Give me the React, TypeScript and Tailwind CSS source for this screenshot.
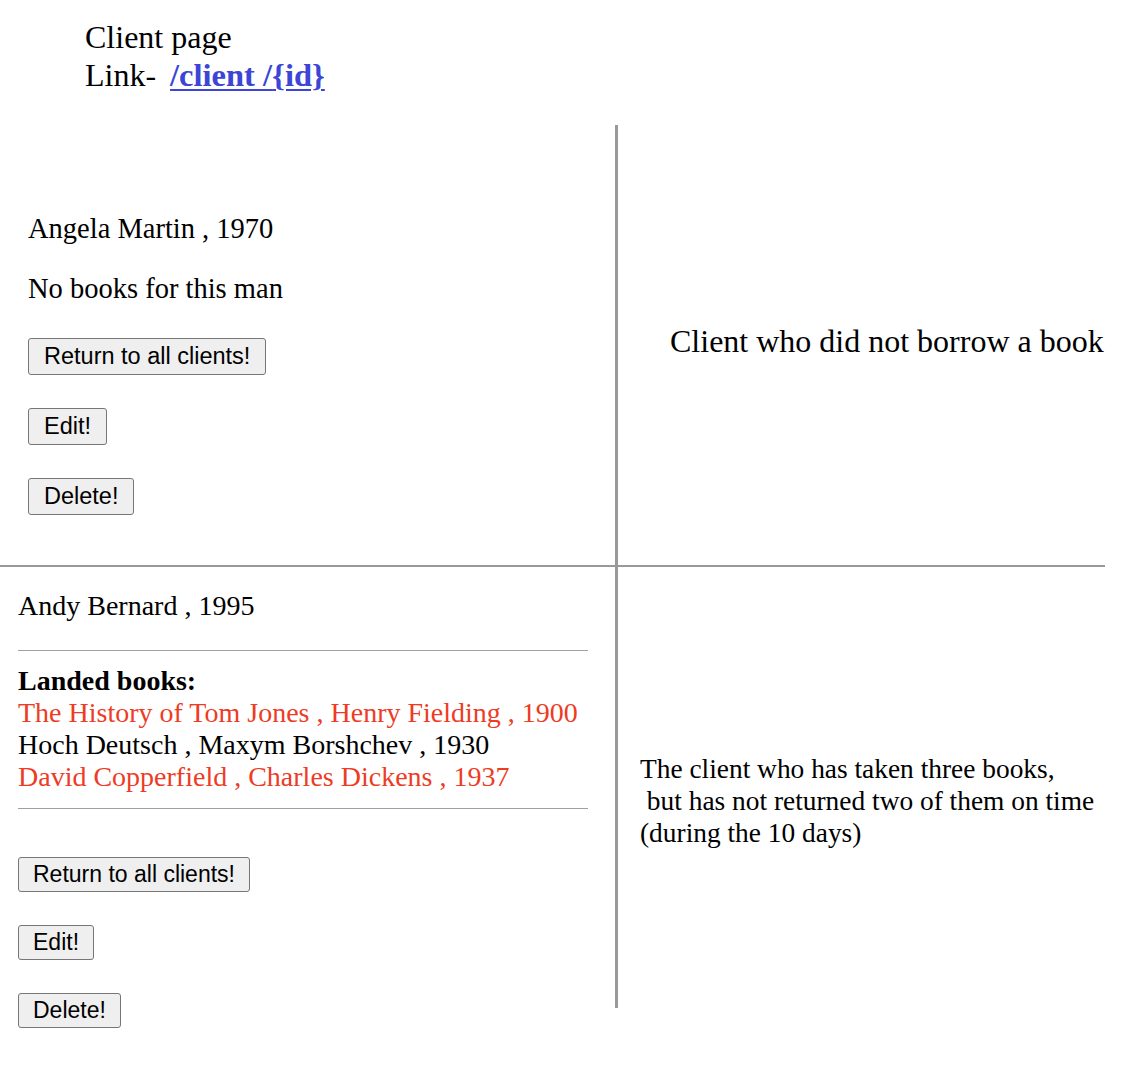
import React from 'react';

const serif = "font-['Liberation_Serif','Times_New_Roman',serif]";

const books = [
    { title: 'The History of Tom Jones', author: 'Henry Fielding', year: 1900, late: true },
    { title: 'Hoch Deutsch', author: 'Maxym Borshchev', year: 1930, late: false },
    { title: 'David Copperfield', author: 'Charles Dickens', year: 1937, late: true },
];

const ClassicButton = ({ label, size }: { label: string, size: 'lg' | 'md' }) => (
    <button
        className={`block rounded-[3px] border border-[#767676] bg-[#efefef] text-black font-['Liberation_Sans',Arial,sans-serif] leading-none ${
            size === 'lg' ? 'h-[37px] px-[15px] text-[23.5px]' : 'h-[35px] px-[14px] text-[23px]'
        }`}
    >
        {label}
    </button>
);

export default function App() {
    return (
        <div className={`${serif} bg-white text-black min-h-[1072px]`}>
            {/* Header */}
            <div className="pl-[85px] pt-[18px] text-[32px] leading-[38px]">
                <div>Client page</div>
                <div>
                    Link-{' '}
                    <a href="#" className="ml-[6px] text-[32.5px] font-bold text-[#3c45d5] underline underline-offset-[3px] decoration-2">
                        /client /{'{id}'}
                    </a>
                </div>
            </div>

            <div className="mt-[31px] w-[1105px]">
                {/* Client without books */}
                <div className="grid grid-cols-[615px_1fr] border-b-2 border-[#999999]">
                    <div className="pl-[28px] pt-[88px] h-[440px]">
                        <p className="text-[28.5px] leading-[32px]">Angela Martin , 1970</p>
                        <p className="mt-[28px] text-[28.5px] leading-[32px]">No books for this man</p>
                        <div className="mt-[33px] flex flex-col items-start gap-[33px]">
                            <ClassicButton label="Return to all clients!" size="lg" />
                            <ClassicButton label="Edit!" size="lg" />
                            <ClassicButton label="Delete!" size="lg" />
                        </div>
                    </div>
                    <div className="border-l-[3px] border-[#999999] pl-[52px] pt-[197px] text-[32px] leading-[38px]">
                        Client who did not borrow a book
                    </div>
                </div>

                {/* Client with late books */}
                <div className="grid grid-cols-[615px_1fr] items-start">
                    <div className="pl-[18px] pt-[23px] pr-[27px]">
                        <p className="text-[28px] leading-[32px]">Andy Bernard , 1995</p>
                        <hr className="mt-[28px] border-t border-[#a0a0a0]" />
                        <div className="mt-[14px] text-[28px] leading-[32px]">
                            <p className="font-bold">Landed books:</p>
                            {books.map((b, i) => (
                                <p key={i} className={b.late ? 'text-[#ee3b24]' : 'text-black'}>
                                    {b.title} , {b.author} , {b.year}
                                </p>
                            ))}
                        </div>
                        <hr className="mt-[15px] border-t border-[#a0a0a0]" />
                        <div className="mt-[48px] flex flex-col gap-[33px] items-start">
                            <ClassicButton label="Return to all clients!" size="md" />
                            <ClassicButton label="Edit!" size="md" />
                            <ClassicButton label="Delete!" size="md" />
                        </div>
                    </div>
                    <div className="h-[441px] border-l-[3px] border-[#999999] pl-[22px] pt-[186px] text-[27.4px] leading-[32px]">
                        <p>The client who has taken three books,</p>
                        <p>{'\u00a0'}but has not returned two of them on time</p>
                        <p>(during the 10 days)</p>
                    </div>
                </div>
            </div>
        </div>
    );
}
